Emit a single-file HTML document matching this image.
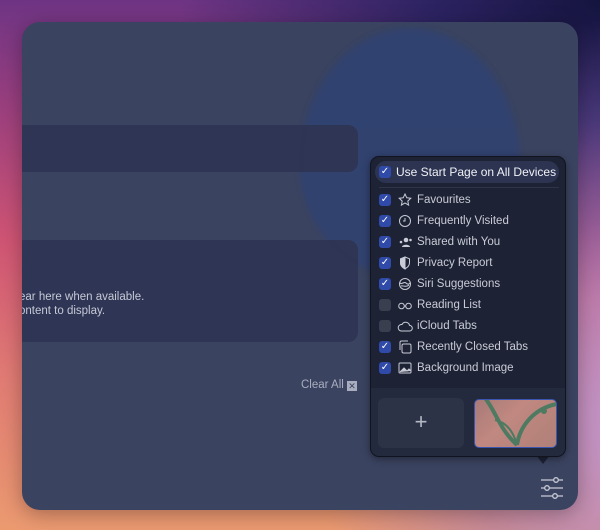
<!DOCTYPE html>
<html><head><style>
*{margin:0;padding:0;box-sizing:border-box}
body{width:600px;height:530px;overflow:hidden;position:relative;font-family:"Liberation Sans",sans-serif;
background:linear-gradient(180deg,#6e3484 0%,#9a3f7e 20%,#cf5474 45%,#e07a74 70%,#eb9a70 100%)}
.r{position:absolute;inset:0;background:radial-gradient(ellipse 420px 300px at 600px 0px,#15143f 0%,#2c2362 40%,rgba(60,40,110,0) 100%)}
.r2{position:absolute;inset:0;background:radial-gradient(ellipse 300px 400px at 620px 420px,rgba(190,150,210,0.9) 0%,rgba(160,120,190,0.5) 50%,rgba(160,120,190,0) 100%)}
.win{position:absolute;left:22px;top:22px;width:556px;height:488px;border-radius:18px;background:#3a4360;overflow:hidden;box-shadow:0 4px 20px rgba(0,0,0,.3)}
.blob{position:absolute;left:278px;top:6px;width:220px;height:250px;border-radius:50% 50% 45% 50%/55% 55% 45% 45%;background:#304272;filter:blur(3px);opacity:.85}
.bar{position:absolute;left:0;width:336px;background:#2e3553;border-radius:0 10px 10px 0;opacity:.95}
.t{position:absolute;color:#c5c9d6;font-size:11.5px}
.pop{position:absolute;left:370px;top:156px;width:196px;height:301px;background:#1d2235;border:1px solid #11141f;border-radius:9px;box-shadow:0 2px 8px rgba(0,0,0,.4);overflow:hidden}
.hdr{position:absolute;left:4px;top:4px;width:184px;height:22px;background:#2c3452;border-radius:11px}
.cb{position:absolute;width:12px;height:12px;border-radius:3px;background:#2f4aa8;color:#fff;font-size:10px;line-height:12px;text-align:center}
.cb.off{background:#3a3f50}
.it{position:absolute;left:0;height:20px;width:190px;color:#c9ccd6;font-size:11.5px}
.it .cb{left:8px;top:4px}
.it .ic{position:absolute;left:26px;top:2px;width:16px;height:16px}
.it span.l{position:absolute;left:46px;top:4px;line-height:13px}
.bot{position:absolute;left:0;top:231px;width:196px;height:70px;background:#242a3e}
</style></head><body>
<div class="r"></div><div class="r2"></div>
<div class="win">
 <div class="blob"></div>
 <div class="bar" style="top:103px;height:47px"></div>
 <div class="bar" style="top:218px;height:102px"></div>
 <div class="t" style="left:-3px;top:269px">ear here when available.</div>
 <div class="t" style="left:-3px;top:283px">ontent to display.</div>
 <div class="t" style="left:279px;top:357px;color:#a9aebf">Clear All <span style="display:inline-block;width:10px;height:10px;background:#a9aebf;color:#3a4360;font-size:9px;line-height:10px;text-align:center;vertical-align:-1px">✕</span></div>
 <svg style="position:absolute;left:518px;top:455px" width="24" height="22" viewBox="0 0 24 22" fill="none" stroke="#c9ccd6" stroke-width="1.3"><path d="M1 3H23M1 11H23M1 19H23"/><circle cx="16" cy="3" r="2.3" fill="#3a4360"/><circle cx="7" cy="11" r="2.3" fill="#3a4360"/><circle cx="15" cy="19" r="2.3" fill="#3a4360"/></svg>
</div>
<svg style="position:absolute;left:536px;top:455px" width="14" height="10"><path d="M0 0L7 9L14 0Z" fill="#1d2235"/></svg>
<div class="pop">
 <div class="hdr"></div>
 <div class="cb" style="left:8px;top:9px">✓</div>
 <div style="position:absolute;left:25px;top:8px;color:#f0f1f5;font-size:12px">Use Start Page on All Devices</div>
 <div style="position:absolute;left:8px;top:30px;width:180px;height:1px;background:#2f3548"></div>
 <div class="it" style="top:33px"><div class="cb">✓</div><svg class="ic" viewBox="0 0 16 16" fill="none" stroke="#c9ccd6"><path d="M8 2l1.8 3.8 4 .5-3 2.8.8 4L8 11l-3.6 2.1.8-4-3-2.8 4-.5z"/></svg><span class="l">Favourites</span></div>
 <div class="it" style="top:54px"><div class="cb">✓</div><svg class="ic" viewBox="0 0 16 16" fill="none" stroke="#c9ccd6"><circle cx="8" cy="8" r="5.5"/><path d="M8 5v3H6"/></svg><span class="l">Frequently Visited</span></div>
 <div class="it" style="top:75px"><div class="cb">✓</div><svg class="ic" viewBox="0 0 16 16" fill="#c9ccd6"><circle cx="9" cy="6" r="2.3"/><path d="M5 13c0-3 8-3 8 0z"/><circle cx="4" cy="8" r="1.3"/><circle cx="13.5" cy="6" r="1.3"/></svg><span class="l">Shared with You</span></div>
 <div class="it" style="top:96px"><div class="cb">✓</div><svg class="ic" viewBox="0 0 16 16" fill="none" stroke="#c9ccd6"><path d="M8 2l4.5 1.8v4c0 3-2 4.7-4.5 6-2.5-1.3-4.5-3-4.5-6v-4z"/><path d="M8 2v12c-2.5-1.3-4.5-3-4.5-6v-4z" fill="#c9ccd6"/></svg><span class="l">Privacy Report</span></div>
 <div class="it" style="top:117px"><div class="cb">✓</div><svg class="ic" viewBox="0 0 16 16" fill="none" stroke="#c9ccd6"><circle cx="8" cy="8" r="5.5"/><path d="M3 7c2 2 4-2 6 0s3 1 4 0M4 10c2-1 5 2 8-1"/></svg><span class="l">Siri Suggestions</span></div>
 <div class="it" style="top:138px"><div class="cb off"></div><svg class="ic" viewBox="0 0 16 16" fill="none" stroke="#c9ccd6"><circle cx="4.5" cy="9" r="2.8"/><circle cx="11.5" cy="9" r="2.8"/><path d="M7.3 9h1.4"/></svg><span class="l">Reading List</span></div>
 <div class="it" style="top:159px"><div class="cb off"></div><svg class="ic" viewBox="0 0 16 16" fill="none" stroke="#c9ccd6"><path d="M4 13h8.5a2.8 2.8 0 000-5.6A4 4 0 005 6.5 3.2 3.2 0 004 13z"/></svg><span class="l">iCloud Tabs</span></div>
 <div class="it" style="top:180px"><div class="cb">✓</div><svg class="ic" viewBox="0 0 16 16" fill="none" stroke="#c9ccd6"><rect x="5" y="5" width="9" height="9" rx="1.5"/><path d="M3 11V3.5A1.5 1.5 0 014.5 2H11"/></svg><span class="l">Recently Closed Tabs</span></div>
 <div class="it" style="top:201px"><div class="cb">✓</div><svg class="ic" viewBox="0 0 16 16" fill="none" stroke="#c9ccd6"><rect x="2" y="3" width="12" height="10" rx="1"/><path d="M3 12l4-4 3 3 2-2 2 2" fill="#c9ccd6"/></svg><span class="l">Background Image</span></div>
 <div class="bot">
  <div style="position:absolute;left:7px;top:10px;width:86px;height:50px;background:#2d3347;border-radius:6px;color:#b5b9c6;font-size:22px;text-align:center;line-height:48px;font-weight:300">+</div>
  <div style="position:absolute;left:103px;top:11px;width:83px;height:49px;border:1.5px solid #3a56b0;border-radius:5px;background:linear-gradient(135deg,#a87a78,#c08880 40%,#b08078);overflow:hidden">
   <svg width="83" height="49" style="position:absolute;left:0;top:0" fill="none" stroke="#4e7a62" stroke-width="4"><path d="M10 -2C20 10 25 30 42 45"/><path d="M42 45C45 25 60 8 82 4"/><path d="M20 20C30 22 38 30 42 45" stroke-width="2"/></svg>
   <div style="position:absolute;left:66px;top:8px;width:6px;height:6px;border-radius:50%;background:#4e7a62"></div>
  </div>
 </div>
</div>
</body></html>
